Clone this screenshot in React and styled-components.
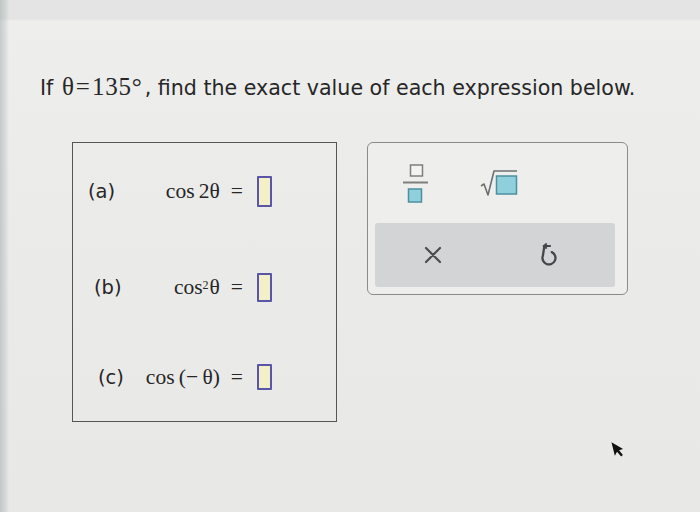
import React from "react";
import styled, { createGlobalStyle } from "styled-components";

const Global = createGlobalStyle`
  html, body { margin: 0; padding: 0; }
  body { width: 700px; height: 512px; overflow: hidden; background: #ebebea; }
`;

const Page = styled.div`
  position: relative;
  width: 700px;
  height: 512px;
  box-sizing: border-box;
  display: flex;
  flex-direction: column;
  background:
    linear-gradient(90deg, rgba(120,140,140,0.35) 0px, rgba(120,140,140,0.15) 6px, rgba(0,0,0,0) 9px),
    linear-gradient(180deg, #e3e4e3 0px, #e3e4e3 19px, #eeeeed 21px, #ebebea 200px, #e8e8e7 512px);
  font-family: "DejaVu Sans", Verdana, sans-serif;
  color: #2a2a2a;
`;

const Title = styled.div`
  height: 28px;
  margin: 74px 0 0 40px;
  font-size: 20.6px;
  line-height: 28px;
  color: #272727;
  white-space: nowrap;
`;

const Serif = styled.span`
  font-family: "Liberation Serif", "Times New Roman", serif;
  font-size: ${(p) => p.$size || 25}px;
  line-height: 1;
  letter-spacing: ${(p) => p.$ls || 0}px;
  margin: 0 ${(p) => p.$mx || 0}px;
`;

const Content = styled.div`
  display: flex;
  align-items: flex-start;
  gap: 30px;
  margin: 40px 0 0 72px;
`;

const Problems = styled.div`
  width: 265px;
  height: 280px;
  box-sizing: border-box;
  border: 1px solid #555;
  display: flex;
  flex-direction: column;
  padding: 0 64px 0 0;
`;

const Row = styled.div`
  height: 32px;
  display: flex;
  align-items: center;
  margin-top: ${(p) => p.$top}px;
  padding-left: ${(p) => p.$labelX}px;
`;

const Label = styled.span`
  font-size: 19.5px;
  color: #262626;
`;

const Expr = styled.span`
  margin-left: auto;
  display: flex;
  align-items: center;
  font-family: "Liberation Serif", "Times New Roman", serif;
  font-size: 21.5px;
  color: #262626;
`;

const Eq = styled.span`
  margin: 0 14px 0 11px;
`;

const Sup = styled.sup`
  font-size: 12px;
  position: relative;
  top: -2px;
  margin-right: 1px;
`;

const Slot = styled.span`
  display: inline-block;
  width: 15px;
  height: ${(p) => p.$h || 30}px;
  box-sizing: border-box;
  border: 2px solid #5a55a8;
  border-radius: 1px;
  background: #f3efc6;
`;

const Pad = styled.div`
  width: 261px;
  height: 153px;
  box-sizing: border-box;
  border: 1.5px solid #8a8b8c;
  border-radius: 6px;
  background: #eeeeed;
  display: flex;
  flex-direction: column;
  padding: 0 12px 7px 7px;
`;

const Tools = styled.div`
  height: 80px;
  display: flex;
  align-items: center;
  gap: 50px;
  padding-left: 27px;
`;

const Keys = styled.div`
  flex: 1;
  background: #d3d4d5;
  border-radius: 3px;
  display: flex;
  align-items: center;
  justify-content: space-around;
  padding: 0 8px 0 0;
`;

const Pointer = styled.div`
  position: absolute;
  left: 611px;
  top: 440px;
`;

const FracIcon = () => (
  <svg width="28" height="42" viewBox="0 0 28 42">
    <rect x="8.5" y="3" width="12" height="11" fill="#f3f3f2" stroke="#7e7f80" strokeWidth="1.5" />
    <line x1="1" y1="20.5" x2="26" y2="20.5" stroke="#7e7f80" strokeWidth="2" />
    <rect x="6.5" y="27" width="13" height="13" fill="#8fd0dc" stroke="#4e8fa0" strokeWidth="1.5" />
  </svg>
);

const SqrtIcon = () => (
  <svg width="38" height="30" viewBox="0 0 38 30">
    <polyline points="1,18 4,16 8,27 14,3 37,3" fill="none" stroke="#6e6f70" strokeWidth="1.6" strokeLinejoin="round" />
    <rect x="16.5" y="8" width="20" height="18" fill="#8fd0dc" stroke="#4e8fa0" strokeWidth="1.5" />
  </svg>
);

const XIcon = () => (
  <svg width="18" height="18" viewBox="0 0 18 18">
    <path d="M2 2 L16 16 M16 2 L2 16" stroke="#4c4d4f" strokeWidth="2.2" strokeLinecap="round" />
  </svg>
);

const UndoIcon = () => (
  <svg width="18" height="24" viewBox="0 0 18 24">
    <path d="M6.2 1 L3.8 3 L6.2 5" fill="none" stroke="#45464a" strokeWidth="1.8" strokeLinecap="round" strokeLinejoin="round" />
    <path d="M3.8 3 L10 3" fill="none" stroke="#45464a" strokeWidth="2.2" strokeLinecap="round" />
    <path d="M4.3 3.5 L2.9 12.6 A6.5 6.5 0 1 0 11.8 9.1" fill="none" stroke="#45464a" strokeWidth="2.3" strokeLinecap="round" />
  </svg>
);

const Cursor = () => (
  <svg width="14" height="20" viewBox="0 0 14 20">
    <path d="M2 1 L2.5 15 L5.5 11.5 L8.5 17 L10.5 16 L7.8 10.5 L12 10 Z" fill="#111" transform="rotate(-12 7 9)" />
  </svg>
);

export default function App() {
  return (
    <>
      <Global />
      <Page>
        <Title>
          If <Serif $mx={2}>θ</Serif>
          <Serif>=</Serif>
          <Serif $ls={0.8} $mx={2}>135°</Serif>, find the exact value of each expression below.
        </Title>
        <Content>
          <Problems>
            <Row $top={32} $labelX={15}>
              <Label>(a)</Label>
              <Expr>
                cos&thinsp;2θ<Eq>=</Eq>
                <Slot $h={31} />
              </Expr>
            </Row>
            <Row $top={64} $labelX={21}>
              <Label>(b)</Label>
              <Expr>
                cos<Sup>2</Sup>θ<Eq>=</Eq>
                <Slot $h={29} />
              </Expr>
            </Row>
            <Row $top={58} $labelX={25}>
              <Label>(c)</Label>
              <Expr>
                cos&thinsp;(−&thinsp;θ)<Eq>=</Eq>
                <Slot $h={26} />
              </Expr>
            </Row>
          </Problems>
          <Pad>
            <Tools>
              <FracIcon />
              <SqrtIcon />
            </Tools>
            <Keys>
              <XIcon />
              <UndoIcon />
            </Keys>
          </Pad>
        </Content>
        <Pointer>
          <Cursor />
        </Pointer>
      </Page>
    </>
  );
}
